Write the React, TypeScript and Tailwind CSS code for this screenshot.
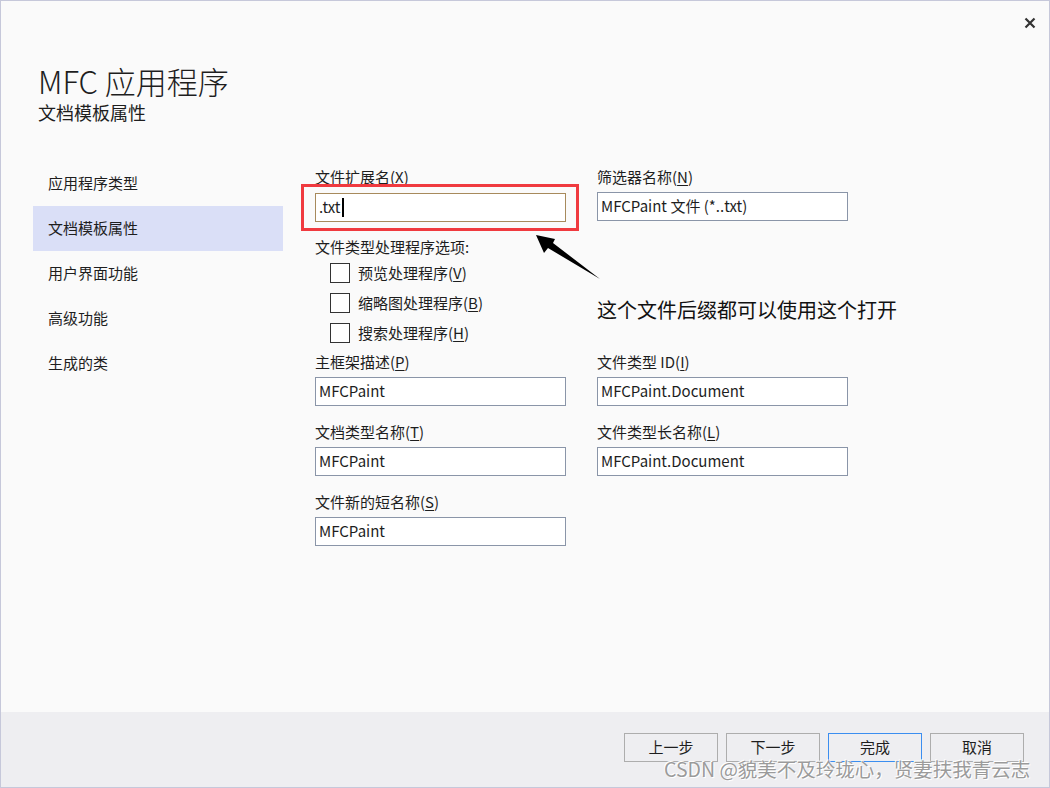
import React from 'react';

const FONT = '[font-family:"Noto_Sans_CJK_SC","Noto_Sans",sans-serif]';

const navItems = ['应用程序类型', '文档模板属性', '用户界面功能', '高级功能', '生成的类'];

function Label({ text, hotkey }: { text: string; hotkey: string }) {
  return (
    <div className="h-[20px] leading-[20px] text-[15px] text-[#1e1e1e] whitespace-nowrap">
      {text}(<u className="underline-offset-2">{hotkey}</u>)
    </div>
  );
}

function Field({ label, hotkey, value }: { label: string; hotkey: string; value: string }) {
  return (
    <div className="flex flex-col gap-[5px]">
      <Label text={label} hotkey={hotkey} />
      <div className="h-[29px] border border-[#8a95a8] bg-white px-[3px] flex items-center text-[15px] text-[#1e1e1e] whitespace-nowrap">
        {value}
      </div>
    </div>
  );
}

function Check({ text, hotkey }: { text: string; hotkey: string }) {
  return (
    <div className="h-[30px] flex items-center gap-[8px] pl-[15px] text-[15px] text-[#1e1e1e]">
      <div className="w-[20px] h-[20px] border border-[#333] bg-white" />
      <span>
        {text}(<u className="underline-offset-2">{hotkey}</u>)
      </span>
    </div>
  );
}

export default function App() {
  return (
    <div className={`relative w-[1050px] h-[788px] border border-[#c6c8da] bg-[#fafafa] flex flex-col ${FONT}`}>
      {/* 标题栏 */}
      <div className="h-[44px] flex justify-end items-center pr-[13px]">
        <svg width="12" height="12" viewBox="0 0 12 12">
          <path d="M1.5 1.5 L10.5 10.5 M10.5 1.5 L1.5 10.5" stroke="#333" strokeWidth="2.2" />
        </svg>
      </div>
      <div className="pl-[37px]">
        <div className="mt-[20px] h-[32px] leading-[32px] text-[31px] font-light text-[#1e1e1e]">MFC 应用程序</div>
        <div className="mt-[4px] h-[22px] leading-[22px] text-[18px] text-[#1e1e1e]">文档模板属性</div>
      </div>

      <div className="flex-1 flex pt-[38px]">
        {/* 左侧导航 */}
        <div className="w-[282px] pl-[32px] flex flex-col">
          {navItems.map((item, i) => (
            <div
              key={item}
              className={`h-[45px] flex items-center px-[15px] text-[15px] text-[#1e1e1e] ${i === 1 ? 'bg-[#dadff7]' : ''}`}
            >
              {item}
            </div>
          ))}
        </div>

        {/* 表单 */}
        <div className="pl-[32px] pt-[6px]">
          <div className="grid grid-cols-[251px_251px] gap-x-[31px]">
            <div className="flex flex-col gap-[6px]">
              <Label text="文件扩展名" hotkey="X" />
              <div className="relative">
                <div className="h-[29px] border border-[#a78a5c] bg-white px-[3px] flex items-center text-[15px] text-[#1e1e1e]">
                  .txt<span className="w-[2px] h-[19px] bg-black ml-[1px]" />
                </div>
                <div className="absolute -left-[14px] -right-[13px] -top-[9px] -bottom-[9px] border-[3px] border-[#f03a3f]" />
              </div>
            </div>
            <Field label="筛选器名称" hotkey="N" value="MFCPaint 文件 (*..txt)" />

            <div className="pt-[15px]">
              <div className="h-[20px] leading-[20px] text-[15px] text-[#1e1e1e]">文件类型处理程序选项:</div>
              <div className="flex flex-col pt-[1px]">
                <Check text="预览处理程序" hotkey="V" />
                <Check text="缩略图处理程序" hotkey="B" />
                <Check text="搜索处理程序" hotkey="H" />
              </div>
            </div>
            <div className="pt-[74px] text-[20px] leading-[28px] text-[#111] whitespace-nowrap">
              这个文件后缀都可以使用这个打开
            </div>

            <div className="pt-[4px]">
              <Field label="主框架描述" hotkey="P" value="MFCPaint" />
            </div>
            <div className="pt-[4px]">
              <Field label="文件类型 ID" hotkey="I" value="MFCPaint.Document" />
            </div>

            <div className="pt-[16px]">
              <Field label="文档类型名称" hotkey="T" value="MFCPaint" />
            </div>
            <div className="pt-[16px]">
              <Field label="文件类型长名称" hotkey="L" value="MFCPaint.Document" />
            </div>

            <div className="pt-[16px]">
              <Field label="文件新的短名称" hotkey="S" value="MFCPaint" />
            </div>
          </div>
        </div>
      </div>

      {/* 底部按钮 */}
      <div className="h-[75px] bg-[#eeeef1] flex justify-end items-start pt-[21px] pr-[25px] gap-[8px]">
        {['上一步', '下一步', '完成', '取消'].map((b) => (
          <div
            key={b}
            className={`w-[94px] h-[29px] flex items-center justify-center text-[15px] text-[#1e1e1e] border ${
              b === '完成' ? 'border-[#3b8ef0]' : 'border-[#adadad]'
            }`}
          >
            {b}
          </div>
        ))}
      </div>

      {/* 标注箭头 */}
      <svg className="absolute left-[529px] top-[229px]" width="75" height="55" viewBox="0 0 75 55">
        <polygon points="6,5 25,9 23,13 70,49 18,18 14,23" fill="#000" />
      </svg>

      {/* 水印 */}
      <div className="absolute left-[663px] top-[755px] text-[19.5px] leading-[26px] text-[#9b9b9b] whitespace-nowrap [text-shadow:1px_1px_0_#fff,-1px_-1px_0_#fff]">
        CSDN @貌美不及玲珑心，贤妻扶我青云志
      </div>
    </div>
  );
}
